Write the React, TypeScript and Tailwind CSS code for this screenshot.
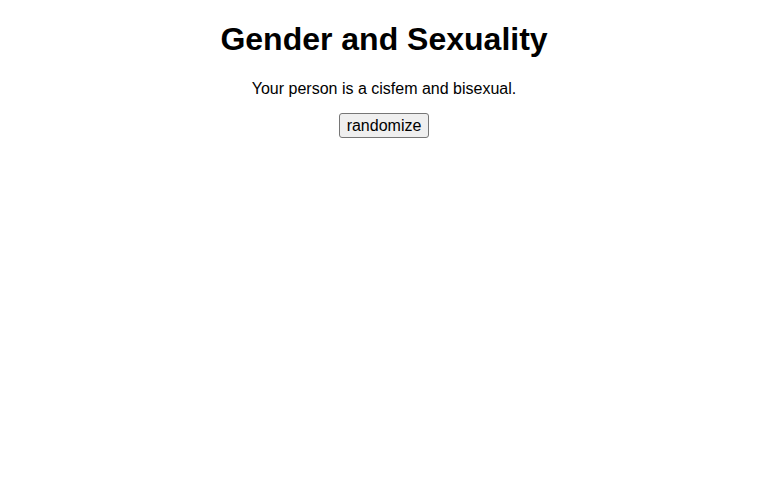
import { useState } from 'react'

const genders = ['cisfem', 'cismasc', 'transfem', 'transmasc', 'nonbinary', 'agender']
const sexualities = ['bisexual', 'heterosexual', 'homosexual', 'asexual', 'pansexual']

export default function App() {
  const [gender, setGender] = useState('cisfem')
  const [sexuality, setSexuality] = useState('bisexual')

  const randomize = () => {
    setGender(genders[Math.floor(Math.random() * genders.length)])
    setSexuality(sexualities[Math.floor(Math.random() * sexualities.length)])
  }

  return (
    <div className="min-h-[480px] bg-white text-center text-black font-['Liberation_Sans',Arial,sans-serif]">
      <h1 className="pt-[21px] text-[32px] leading-[37px] font-bold">Gender and Sexuality</h1>
      <p className="mt-[22px] text-base leading-[18px]">
        Your person is a {gender} and {sexuality}.
      </p>
      <button
        type="button"
        onClick={randomize}
        className="mt-[15px] rounded-[3px] border border-[#767676] bg-[#efefef] px-[7px] py-[2px] text-base leading-[19px] hover:bg-[#e5e5e5]"
      >
        randomize
      </button>
    </div>
  )
}
